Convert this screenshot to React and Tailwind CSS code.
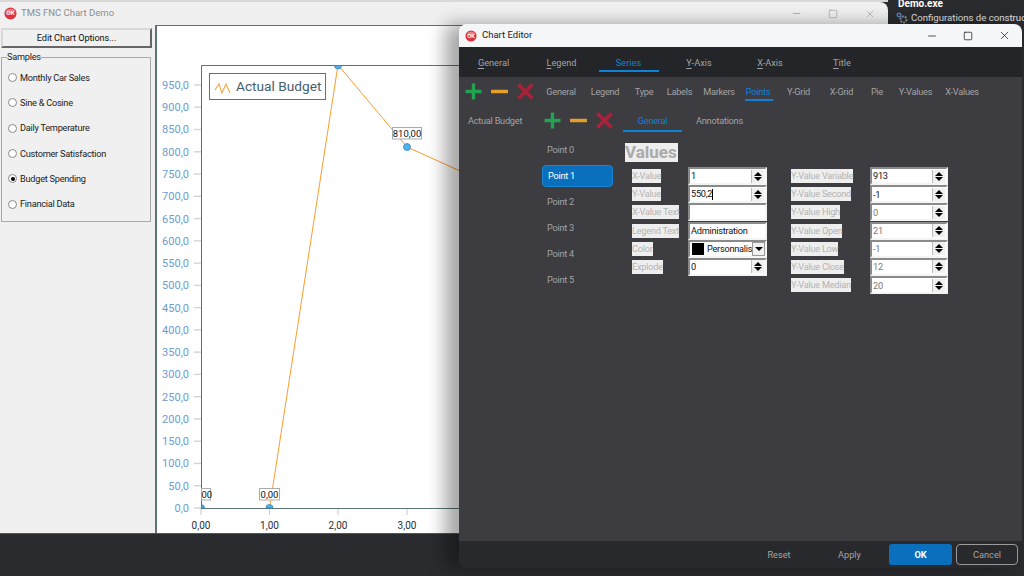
import React from "react";
import { Minus, Square, X } from "lucide-react";

const samples = [
  { label: "Monthly Car Sales" },
  { label: "Sine & Cosine" },
  { label: "Daily Temperature" },
  { label: "Customer Satisfaction" },
  { label: "Budget Spending", checked: true },
  { label: "Financial Data" },
];

const seriesTabs = [
  { label: "General", width: "w-[69px]" },
  { label: "Legend", width: "w-[67px]" },
  { label: "Series", width: "w-[67px]", active: true },
  { label: "Y-Axis", width: "w-[74px]" },
  { label: "X-Axis", width: "w-[68px]" },
  { label: "Title", width: "w-[76px]" },
];

const subTabs = [
  { label: "General", width: "w-[44px]" },
  { label: "Legend", width: "w-[44px]" },
  { label: "Type", width: "w-[34px]" },
  { label: "Labels", width: "w-[37px]" },
  { label: "Markers", width: "w-[42px]" },
  { label: "Points", width: "w-[36px]", active: true },
  { label: "Y-Grid", width: "w-[45px]" },
  { label: "X-Grid", width: "w-[41px]" },
  { label: "Pie", width: "w-[30px]" },
  { label: "Y-Values", width: "w-[47px]" },
  { label: "X-Values", width: "w-[46px]" },
];

const points = ["Point 0", "Point 1", "Point 2", "Point 3", "Point 4", "Point 5"];

const leftFields = [
  { label: "X-Value", value: "1", spin: true },
  { label: "Y-Value", value: "550,2", spin: true, caret: true },
  { label: "X-Value Text", value: "" },
  { label: "Legend Text", value: "Administration" },
  { label: "Color", color: true },
  { label: "Explode", value: "0", spin: true },
];

const rightFields = [
  { label: "Y-Value Variable", value: "913", spin: true },
  { label: "Y-Value Second", value: "-1", spin: true },
  { label: "Y-Value High", value: "0", spin: true, dim: true },
  { label: "Y-Value Open", value: "21", spin: true, dim: true },
  { label: "Y-Value Low", value: "-1", spin: true, dim: true },
  { label: "Y-Value Close", value: "12", spin: true, dim: true },
  { label: "Y-Value Median", value: "20", spin: true, dim: true },
];

const yTicks = [950, 900, 850, 800, 750, 700, 650, 600, 550, 500, 450, 400, 350, 300, 250, 200, 150, 100, 50, 0];

const AppIcon = ({ className }) => (
  <svg viewBox="0 0 14 14" className={className}>
    <circle cx="7" cy="7" r="6.5" fill="#d9343f" />
    <ellipse cx="7" cy="4.5" rx="4.5" ry="2.5" fill="#ee7f86" />
    <text x="7" y="9" textAnchor="middle" fontSize="6" fontWeight="700" fill="#fff" fontFamily="Liberation Sans, sans-serif">OK</text>
  </svg>
);

const ToolButtons = () => (
  <div className="flex gap-[9px]">
    <svg viewBox="0 0 17 17" className="w-[17px] h-[17px]">
      <path d="M8.5 0.5v16M0.5 8.5h16" stroke="#22a34f" strokeWidth="3.4" />
    </svg>
    <svg viewBox="0 0 17 17" className="w-[17px] h-[17px]">
      <path d="M1 8.5h15" stroke="#e5a02c" strokeWidth="3.4" strokeLinecap="round" />
    </svg>
    <svg viewBox="0 0 17 17" className="w-[17px] h-[17px]">
      <path d="M1.5 1.5l14 14M15.5 1.5l-14 14" stroke="#a5243a" strokeWidth="3.6" />
    </svg>
  </div>
);

const Spinner = () => (
  <div className="w-[13px] h-[13px] flex flex-col items-center justify-center gap-[1px] border-l border-[#bdbdbd] bg-[#f0f0f0] mr-[1px] shrink-0">
    <div className="w-0 h-0 border-x-[4px] border-x-transparent border-b-[4px] border-b-black" />
    <div className="w-0 h-0 border-x-[4px] border-x-transparent border-t-[4px] border-t-black" />
  </div>
);

const Field = ({ field, width }) => (
  <div className={`h-[18px] ${width} bg-white border-2 border-t-[#8a8a8a] border-l-[#8a8a8a] border-r-[#f4f4f4] border-b-[#f4f4f4] flex items-center pl-px text-[9.200px] tracking-[-0.25px] leading-none ${field.dim ? "text-[#777]" : "text-[#111]"}`}>
    {field.color ? (
      <>
        <div className="w-[12px] h-[12px] bg-black ml-[1px] mr-[3px] shrink-0" />
        <span className="flex-1 overflow-hidden whitespace-nowrap">Personnalisé</span>
        <div className="w-[13px] h-[14px] bg-[#f0f0f0] border border-[#999] flex items-center justify-center shrink-0">
          <div className="w-0 h-0 border-x-[4px] border-x-transparent border-t-[4px] border-t-black" />
        </div>
      </>
    ) : (
      <>
        <span className="flex-1 whitespace-nowrap overflow-hidden">
          {field.value}
          {field.caret && <span className="inline-block w-px h-[11px] bg-black align-middle" />}
        </span>
        {field.spin && <Spinner />}
      </>
    )}
  </div>
);

const FieldColumn = ({ fields, labelWidth, inputWidth }) => (
  <div className="flex flex-col gap-[0.2px]">
    {fields.map((field) => (
      <div key={field.label} className="flex items-center h-[18px]">
        <div className={labelWidth}>
          <span className="bg-[#eeeeee] text-[#b4b4b4] text-[9.200px] tracking-[-0.25px] leading-[14px] inline-block whitespace-nowrap">{field.label}</span>
        </div>
        <Field field={field} width={inputWidth} />
      </div>
    ))}
  </div>
);

const Chart = () => (
  <svg viewBox="157 26 731 507" className="w-[731px] h-[507px] block" fontFamily="Roboto, sans-serif">
    {yTicks.map((v) => {
      const y = 508 - v * 0.4453;
      return (
        <g key={v}>
          <line x1="194" x2="201" y1={y} y2={y} stroke="#d4d4d4" strokeWidth="1.4" />
          <text x="189" y={y + 4} textAnchor="end" fontSize="11" fill="#6d9ccf">{v},0</text>
        </g>
      );
    })}
    {[201, 269.5, 338, 407].map((x, i) => (
      <g key={x}>
        <line x1={x} x2={x} y1="508" y2="515" stroke="#cfcfcf" strokeWidth="1.2" />
        <text x={x} y="529" textAnchor="middle" fontSize="10" fill="#26303a">{i},00</text>
      </g>
    ))}
    <path d="M269.5 508L338 65L407 147L480 180" fill="none" stroke="#f79d2d" strokeWidth="1" />
    <path d="M201.5 508.5V65.5H888M201 508.5H888" fill="none" stroke="#5d7377" strokeWidth="1" />
    <rect x="209.5" y="73.5" width="116" height="26" fill="#fff" stroke="#5d7377" />
    <path d="M215 90l4-6 3 9 4-9 4 9" fill="none" stroke="#f5a33a" strokeWidth="1.1" />
    <text x="236" y="91" fontSize="13.700" fill="#46606e">Actual Budget</text>
    <path d="M266 508a3.5 3.5 0 0 1 7 0Z" fill="#4db2ee" stroke="#3a83b5" strokeWidth="0.8" />
    <path d="M201.5 508v-3.500a3.500 3.500 0 0 1 3 3.500Z" fill="#4db2ee" stroke="#3a83b5" strokeWidth="0.8" />
    <path d="M334.500 65.500a3.500 3.500 0 0 0 7 0Z" fill="#4db2ee" stroke="#3a83b5" strokeWidth="0.8" />
    <circle cx="407" cy="147" r="3.500" fill="#4db2ee" stroke="#3a83b5" strokeWidth="0.8" />
    <rect x="201.500" y="488.500" width="9" height="11.500" fill="#fff" stroke="#aaa" />
    <text x="201.500" y="498" fontSize="9.500" fill="#111">00</text>
    <rect x="259.500" y="488.500" width="20" height="11.500" fill="#fff" stroke="#aaa" />
    <text x="269.500" y="498" textAnchor="middle" fontSize="9.500" fill="#111">0,00</text>
    <rect x="392.500" y="127.500" width="29" height="11.500" fill="#fff" stroke="#aaa" />
    <text x="407" y="137" textAnchor="middle" fontSize="9.500" fill="#111">810,00</text>
  </svg>
);

const MainWindow = () => (
  <div className="absolute left-0 top-[2px] w-[888px] h-[532px] bg-[#f0f0f0] rounded-tr-lg flex flex-col border-b border-[#555]">
    <div className="h-[23px] flex items-center pl-[4px] text-[#8d8d8d] text-[9.500px] shrink-0">
      <AppIcon className="w-[13px] h-[13px] mr-[4px]" />
      <span>TMS FNC Chart Demo</span>
      <div className="ml-auto flex items-center gap-[26px] pr-[12px] text-[#9a9a9a]">
        <Minus size={11} strokeWidth={1.5} />
        <Square size={10} strokeWidth={1.5} />
        <X size={12} strokeWidth={1.2} />
      </div>
    </div>
    <div className="flex flex-1 min-h-0">
      <div className="w-[155px] pl-[1px] pt-[3px] shrink-0">
        <button className="block w-[151px] h-[20px] bg-[#f0f0f0] border-2 border-[#666] border-t-[#d8d8d8] border-l-[#d8d8d8] text-[9.200px] tracking-[-0.1px] leading-none text-[#111]">
          Edit Chart Options...
        </button>
        <div className="relative mt-[9px] w-[150px] h-[165px] border border-[#a8a8a8] pt-[7px]">
          <span className="absolute -top-[7px] left-[5px] bg-[#f0f0f0] text-[9.200px] tracking-[-0.25px] leading-[12px] text-[#222]">Samples</span>
          <div className="flex flex-col">
            {samples.map((s) => (
              <div key={s.label} className="h-[25.300px] flex items-center pl-[6px] text-[9.200px] tracking-[-0.25px] text-[#222]">
                <div className="w-[9px] h-[9px] rounded-full bg-white border border-[#8a8a8a] flex items-center justify-center mr-[3px]">
                  {s.checked && <div className="w-[4px] h-[4px] rounded-full bg-black" />}
                </div>
                {s.label}
              </div>
            ))}
          </div>
        </div>
      </div>
      <div className="flex-1 bg-white border-l-2 border-t border-[#5d7377] overflow-hidden">
        <Chart />
      </div>
    </div>
  </div>
);

const ChartEditor = () => (
  <div className="absolute left-[459px] top-[24px] w-[563px] h-[544px] rounded-lg overflow-hidden flex flex-col shadow-[-14px_0_18px_rgba(0,0,0,0.35)]">
    <div className="h-[23px] bg-[#f5f6f8] flex items-center pl-[6px] text-[9.500px] text-[#222] shrink-0">
      <AppIcon className="w-[12px] h-[12px] mr-[5px]" />
      <span>Chart Editor</span>
      <div className="ml-auto flex items-center gap-[25px] pr-[11px] text-[#222]">
        <Minus size={12} strokeWidth={1.5} />
        <Square size={10} strokeWidth={1.8} />
        <X size={13} strokeWidth={1.4} />
      </div>
    </div>
    <div className="h-[30px] bg-[#242528] flex shrink-0">
      {seriesTabs.map((t) => (
        <div key={t.label} className={`${t.width} relative flex justify-center pt-[10px] text-[9.200px] leading-[12px] ${t.active ? "text-[#0b84d8]" : "text-[#a3a3a3]"}`}>
          {t.active ? (
            <span>{t.label}</span>
          ) : (
            <span>
              <span className="underline underline-offset-2 decoration-[#a3a3a3]">{t.label[0]}</span>
              {t.label.slice(1)}
            </span>
          )}
          {t.active && <div className="absolute bottom-[5px] left-[4px] right-[3px] h-[2px] bg-[#0b84d8]" />}
        </div>
      ))}
    </div>
    <div className="flex-1 bg-[#3c3c41] text-[#a3a3a3] text-[9.200px] tracking-[-0.25px] leading-[12px] flex flex-col min-h-0">
      <div className="flex items-center h-[28px] pl-[6px]">
        <ToolButtons />
        <div className="flex ml-[5px] mt-[1px]">
          {subTabs.map((t) => (
            <div key={t.label} className={`${t.width} relative text-center whitespace-nowrap ${t.active ? "text-[#0b84d8]" : ""}`}>
              {t.label}
              {t.active && <div className="absolute -bottom-[3px] left-[5px] right-[3px] h-[2px] bg-[#0b84d8]" />}
            </div>
          ))}
        </div>
      </div>
      <div className="flex pl-[9px] pt-[7px]">
        <div className="w-[76px] pt-[3px] shrink-0 whitespace-nowrap">Actual Budget</div>
        <div className="flex-1">
          <div className="flex items-center h-[17px]">
            <ToolButtons />
            <div className="relative w-[59px] text-center text-[#0b84d8] ml-[10px]">
              General
              <div className="absolute -bottom-[5px] left-0 right-0 h-[2px] bg-[#0b84d8]" />
            </div>
            <div className="ml-[14px]">Annotations</div>
          </div>
          <div className="flex mt-[10px] -ml-[2px]">
            <div className="w-[71px] flex flex-col shrink-0">
              {points.map((p) => (
                <div key={p} className={`h-[22px] mb-[4px] pl-[5px] flex items-center rounded-[4px] ${p === "Point 1" ? "bg-[#0a70bd] text-white border border-[#1a86d6]" : ""}`}>
                  {p}
                </div>
              ))}
            </div>
            <div className="ml-[12px] mt-[4px]">
              <div className="h-[19px] w-[53px] bg-[#eeeeee] text-[#aaaaaa] text-[17px] tracking-normal leading-[19px] font-bold">Values</div>
              <div className="flex mt-[5px] pl-[7px]">
                <FieldColumn fields={leftFields} labelWidth="w-[56px]" inputWidth="w-[79px]" />
                <div className="ml-[24px]">
                  <FieldColumn fields={rightFields} labelWidth="w-[79px]" inputWidth="w-[78px]" />
                </div>
              </div>
            </div>
          </div>
        </div>
      </div>
    </div>
    <div className="h-[27px] bg-[#28292c] flex items-center justify-end pr-[4px] text-[9.200px] text-[#a3a3a3] shrink-0">
      <span className="w-[24px] text-center mr-[47px]">Reset</span>
      <span className="w-[23px] text-center mr-[28px]">Apply</span>
      <div className="w-[63px] h-[21px] bg-[#0a70bd] rounded-[3px] flex items-center justify-center text-white font-bold mr-[4px]">OK</div>
      <div className="w-[62px] h-[21px] border border-[#9a9a9a] rounded-[4px] flex items-center justify-center">Cancel</div>
    </div>
  </div>
);

const App = () => (
  <div className="relative w-[1024px] h-[576px] overflow-hidden bg-[#2a2b2f] font-['Roboto',sans-serif]">
    <div className="absolute left-0 top-0 w-[888px] h-[2px] bg-[#d8d8d8]" />
    <div className="absolute left-[898px] -top-[2px] text-white text-[10px] leading-[12px] font-bold">Demo.exe</div>
    <div className="absolute left-[896px] top-[12px] flex items-center gap-[3px] text-[#e2e2e2] text-[9.600px] leading-[12px] whitespace-nowrap">
      <svg viewBox="0 0 12 12" className="w-[12px] h-[12px]">
        <circle cx="7.500" cy="7.500" r="3" fill="none" stroke="#8f8f8f" strokeWidth="2" strokeDasharray="2 1" />
        <circle cx="3" cy="3" r="1.800" fill="none" stroke="#4d82c4" strokeWidth="1.400" />
      </svg>
      <span>Configurations de construction</span>
    </div>
    <MainWindow />
    <ChartEditor />
  </div>
);

export default App;
